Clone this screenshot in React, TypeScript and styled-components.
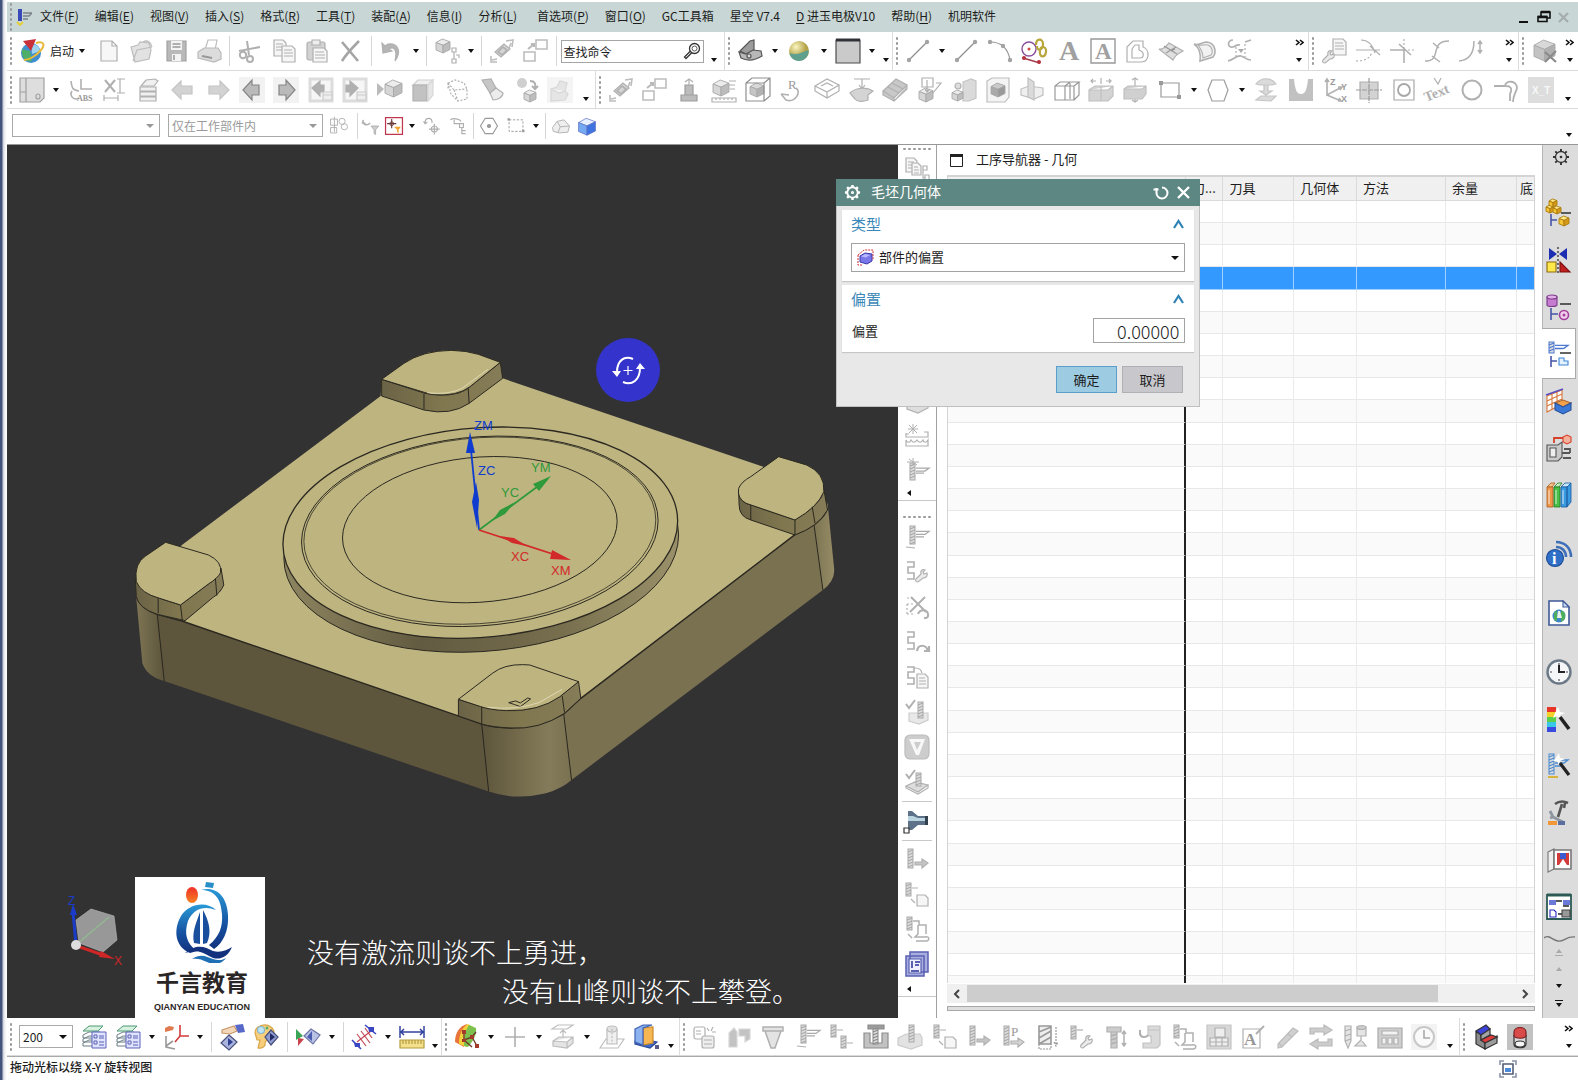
import React from "react";
import styled, { createGlobalStyle, css } from "styled-components";

const Global = createGlobalStyle`
  *, *::before, *::after { box-sizing: border-box; }
  body { margin: 0; background: #fff; }
  body, button, input, select, table { font-family: "Noto Sans CJK SC", "Noto Sans", sans-serif; color: #1c1c1c; }
  button { padding: 0; margin: 0; border: 0; background: none; }
`;

/* ---------- icon building blocks ---------- */

type Tri = [string, string, string];
const GRAY: Tri = ["#ececec", "#d6d6d6", "#bdbdbd"];

const Cube = ({ x = 4, y = 4, s = 18, c = GRAY, line = "#a8a8a8" }: { x?: number; y?: number; s?: number; c?: Tri; line?: string }) => (
  <g stroke={line} strokeWidth={0.9} strokeLinejoin="round">
    <path fill={c[0]} d={`M${x} ${y + s * 0.25}L${x + s * 0.45} ${y}L${x + s} ${y + s * 0.2}L${x + s * 0.5} ${y + s * 0.45}Z`} />
    <path fill={c[1]} d={`M${x} ${y + s * 0.25}L${x + s * 0.5} ${y + s * 0.45}V${y + s}L${x} ${y + s * 0.78}Z`} />
    <path fill={c[2]} d={`M${x + s} ${y + s * 0.2}L${x + s * 0.5} ${y + s * 0.45}V${y + s}L${x + s} ${y + s * 0.75}Z`} />
  </g>
);

const Page = ({ x, y, w = 10, h = 12, lines = true }: { x: number; y: number; w?: number; h?: number; lines?: boolean }) => (
  <g>
    <path fill="#f6f6f6" d={`M${x} ${y}h${w - 3}l3 3v${h - 3}h${-w}z`} />
    {lines && <path strokeWidth={1} d={`M${x + 2} ${y + 4}h${w - 5}M${x + 2} ${y + 7}h${w - 4}M${x + 2} ${y + 10}h${w - 4}`} />}
  </g>
);

const Mill = ({ x = 5, y = 2, h = 20, c = "#a9a9a9" }: { x?: number; y?: number; h?: number; c?: string }) => (
  <g stroke={c}>
    <rect x={x} y={y} width={5} height={h} fill="#dcdcdc" strokeWidth={1} />
    <path strokeWidth={1.2} d={Array.from({ length: Math.floor(h / 3) }, (_, i) => `M${x} ${y + 3 + i * 3}l5 -2`).join("")} />
  </g>
);

const MillLines = ({ x = 4, y = 2, h = 18, c = "#a9a9a9" }: { x?: number; y?: number; h?: number; c?: string }) => (
  <g stroke={c}>
    <Mill x={x} y={y} h={h} c={c} />
    <path strokeWidth={1.3} d={`M${x + 6} ${y + h * 0.3}h13l-4 3h-9M${x + 6} ${y + h * 0.6}h8`} />
  </g>
);

const Wrench = ({ x, y }: { x: number; y: number }) => (
  <path fill="#ebebeb" d={`M${x} ${y + 9}l5 -5c-1 -3 1 -5 4 -4l-2 2 1 2 3 -1c1 3 -1 5 -4 5l-5 4c-2 0 -3 -1 -2 -3z`} />
);

const Zig = ({ x = 3, y = 3 }: { x?: number; y?: number }) => (
  <path strokeWidth={1.6} d={`M${x} ${y}h7v5h-6v6h6v6h-7`} />
);

const Layers = () => (
  <g strokeWidth={1}>
    <path stroke="#6a7f86" fill="#fff" d="M2 19l6 -3h11v3l-6 3h-11zM2 15l6 -3h11v3l-6 3h-11zM2 11l6 -3h11v3l-6 3h-11z" />
    <path stroke="#4a9a72" fill="#d8f0e0" d="M2 7l6 -5h14l-5 5z" />
    <path stroke="#5a63b8" fill="#dfe3fb" d="M11 8h14v16h-14z" />
    <path stroke="#5a63b8" d="M13 11h3v3h-3zM13 17h3v3h-3zM18 12h5M18 14h5M18 18h5M18 21h5" />
  </g>
);

const ICONS: Record<string, React.ReactNode> = {
  newFile: <path fill="#f7f7f7" d="M5 3h11l5 5v15h-16z M16 3v5h5" />,
  open: <path fill="#e2e2e2" stroke="#bdbdbd" d="M2 9l7 -2 2 -3 9 1 2 7 -2 9 -14 3zM4 23l4 -11 15 -3M14 4c4 -3 8 0 9 5" />,
  save: <g><path fill="#b9b9b9" stroke="#a2a2a2" d="M4 3h19v20h-19z" /><path fill="#f4f4f4" stroke="none" d="M8 3h11v9h-11zM9 16h9v7h-9z" /><path stroke="#999" d="M9.500 6h8M9.500 9h8M11 17v5" strokeWidth={1.5} /></g>,
  print: <g><path fill="#fff" stroke="#bdbdbd" d="M9 12l3 -10h9l-2 10z" /><path fill="#dcdcdc" stroke="#bababa" d="M2 14l6 -4h14l3 5v6l-7 3 -16 -4z" /><path stroke="#999" strokeWidth={2} d="M6 18l10 2" /></g>,
  cut: <g strokeWidth={2}><path d="M10 3l2 14M2 13l21 -4" /><circle cx="6" cy="17" r="3.200" /><circle cx="13" cy="21" r="3" /></g>,
  copy: <g><Page x={3} y={2} w={12} h={16} /><Page x={11} y={8} w={13} h={16} /></g>,
  paste: <g><rect x="3" y="4" width="18" height="18" rx="2" fill="#d2d2d2" /><path fill="#eee" d="M8 2h8v5h-8z" /><Page x={9} y={10} w={14} h={14} /></g>,
  del: <path stroke="#a5a5a5" strokeWidth={2.600} d="M4 4l16 19M21 3c-6 6 -12 12 -17 20" />,
  undo: <path fill="#b5b5b5" stroke="#b0b0b0" d="M3 5l1 10 9 -2 -3 -2c4 -3 9 0 6 12 7 -10 3 -18 -7 -17l-3 2z" />,
  cubeTree: <g><Cube x={2} y={1} s={14} /><path d="M18 10h4v4h-4zM18 21h4v4h-4zM20 14v7M22 17h3v3" /></g>,
  rotBox: <g><path fill="#d5d5d5" d="M6 14l9 -8 6 5 -9 8z" /><path strokeWidth={1.600} d="M9 14l5 -5 4 3 -5 5z" /><path stroke="#bdbdbd" strokeWidth={1.600} d="M17 3l7 -1 -1 7M2 18v6h6M22 5l-2 5M3 22l5 -1" /></g>,
  twoBox: <g><path stroke="#bdbdbd" strokeWidth={1.600} d="M13 2h11v9h-11zM1 14h11v9h-11z" /><path stroke="#b9b9b9" strokeWidth={2} d="M5 11l5 -4M8 6h3v3" /></g>,
  clamp: <g stroke="#555"><path fill="#9c9c9c" d="M3 13l10 -10 4 -1v10l-6 5z" /><path fill="#b8b8b8" d="M2 14l2 6c6 3 13 3 21 -2l-1 -5 -8 -1 -7 4z" /><circle cx="12" cy="18" r="2" fill="#ddd" /></g>,
  square: <g><path fill="#cacaca" stroke="#4c4c4c" d="M1 2h24v23h-24z" /><path stroke="#2f3338" strokeWidth={3} d="M1 2h24" /></g>,
  line: <g><path stroke="#8e8e8e" strokeWidth={1.200} d="M4 22L22 4" /><g fill="#a3a3a3" stroke="none"><circle cx="4" cy="22" r="2.200" /><circle cx="22" cy="4" r="2.200" /></g></g>,
  arc: <g><path stroke="#999" d="M3 4q17 0 20 18" /><g fill="#a3a3a3" stroke="none"><circle cx="3" cy="4" r="2.200" /><circle cx="16" cy="8" r="2.200" /><circle cx="23" cy="22" r="2.200" /></g></g>,
  curveOn: <g strokeWidth={1.400}><circle cx="8" cy="11" r="7" stroke="#8a4f9a" /><circle cx="8" cy="11" r="1.500" fill="#c44" stroke="none" /><path stroke="#b9a63a" strokeWidth={2.200} d="M15 7c0 -7 7 -7 7 -1s-6 8 -6 2M19 13c0 -6 7 -5 6 1s-7 6 -6 -1" /><path stroke="#a33a4a" d="M2 20l17 5" /><g fill="#b5303a" stroke="none"><circle cx="3" cy="20" r="2" /><circle cx="18" cy="24" r="2" /></g></g>,
  offset: <g><path d="M3 9l6 -6h10v6c7 2 7 15 -2 15h-14z" /><path d="M8 11l3 -4h4v5c6 2 5 8 1 8h-8z" /></g>,
  sheet: <g><path fill="#dedede" d="M1 11c5 1 7 -3 10 -6l14 8c-4 2 -8 4 -10 9z" /><path stroke="#999" d="M8 15l10 -6M6 8l13 8M13 13l4 -2" /></g>,
  patch: <g><path fill="#f2f2f2" strokeWidth={1.600} d="M2 6c6 2 8 -2 13 -2 8 1 10 10 6 15l-13 4c1 -7 0 -13 -6 -17z" /><path d="M6 7c4 1 7 -1 10 0 5 2 5 8 3 10l-8 3c0 -5 -2 -9 -5 -13z" /></g>,
  spline: <g><path strokeWidth={1.700} d="M7 2c-6 0 -6 8 0 7 4 -1 3 -3 7 -2M2 23c5 -1 9 -6 13 -5s5 4 10 4M19 4l6 -2" /><path strokeDasharray="2 2" d="M10 9v11M19 6v13" /><path fill="#aaa" stroke="none" d="M12 11h6l-3 4z" /></g>,
  pageWrench: <g><Page x={12} y={1} w={13} h={16} /><Wrench x={2} y={13} /></g>,
  trimA: <g><path d="M1 12h24M6 2c8 0 12 6 14 13M15 8l10 9" /><path strokeDasharray="2 2" d="M1 23c8 0 14 -2 16 -9" /></g>,
  trimB: <g><path d="M1 12h14M15 11v14M10 6l12 11" strokeWidth={1.600} /><path strokeDasharray="2 2" d="M15 1v10M15 12h11" /></g>,
  trimC: <path strokeWidth={1.500} d="M1 23c10 0 10 -6 11 -10s2 -10 13 -10M9 5l6 5M8 18l8 6" />,
  trimD: <path strokeWidth={1.500} d="M1 23c11 -1 15 -8 15 -20M22 4v10M20 6l2 -3 2 3M20 12l2 3 2 -3" />,
  cubeX: <g><Cube x={3} y={2} s={21} c={["#d8d8d8", "#c3c3c3", "#b0b0b0"]} /><path stroke="#8b8b8b" strokeWidth={2.200} d="M14 14l11 10M25 13l-11 11" /></g>,

  sheetView: <g stroke="#a0a0a0"><path fill="#dedede" d="M1 1h24v20l-4 4h-20z" /><path d="M7 1v24M1 15h6" /><rect x="17" y="17" width="4" height="5" rx="2" /></g>,
  abs: <g><path strokeWidth={1.600} d="M13 2v10h11M3 4c1 8 2 9 8 10M4 14c-3 5 2 10 7 7" /><text x="9" y="24" fontSize="8" fontWeight="700" fontFamily="Liberation Serif" stroke="none" fill="#999">ABS</text></g>,
  dimX: <g><path strokeWidth={2} d="M3 3l10 12M13 3l-10 12" /><path d="M18 2v14M15 2h8M15 16h8M2 21h14M2 18v6M16 18v6" /></g>,
  layerList: <g fill="#f0f0f0"><path d="M10 3l9 -1 3 2 -4 5h-13z" /><path d="M4 10h16v4h-16zM4 15h16v4h-16zM4 20h16v4h-16z" /></g>,
  left: <path fill="#d3d3d3" stroke="#c4c4c4" d="M2 13l9 -9v5h11v8h-11v5z" />,
  right: <path fill="#d3d3d3" stroke="#c4c4c4" d="M24 13l-9 -9v5h-11v8h11v5z" />,
  leftD: <g><path fill="#f2f2f2" stroke="none" d="M0 0h26v26h-26z" /><path fill="#bababa" stroke="#858585" d="M4 13l9 -10v5h7v10h-7v5z" /></g>,
  rightD: <g><path fill="#f2f2f2" stroke="none" d="M0 0h26v26h-26z" /><path fill="#bababa" stroke="#858585" d="M22 13l-9 -10v5h-7v10h7v5z" /></g>,
  leftBox: <g><path fill="#f6f6f6" stroke="#dcdcdc" strokeWidth={3} d="M2 2h22v22h-22z" /><path fill="#b0b0b0" d="M4 11l8 -7v4h4v7h-4v4z" /><path fill="#eee" stroke="#ccc" d="M15 15h9v8h-9zM15 18h9" /></g>,
  rightBox: <g><path fill="#f6f6f6" stroke="#dcdcdc" strokeWidth={3} d="M2 2h22v22h-22z" /><path fill="#b0b0b0" d="M16 11l-8 -7v4h-4v7h4v4z" /><path fill="#eee" stroke="#ccc" d="M15 15h9v8h-9zM15 18h9" /></g>,
  cubeIn: <g><path fill="#bbb" stroke="none" d="M1 6l7 6 -7 7z" /><Cube x={9} y={3} s={17} /></g>,
  cubeSolid: <g><path fill="#efefef" stroke="#cfcfcf" d="M3 8l5 -5h15l-5 5z" /><path fill="#c2c2c2" stroke="#b0b0b0" d="M3 8h14v16h-14z" /><path fill="#e6e6e6" stroke="#d8d8d8" d="M18 8l5 -5v15l-5 6z" /></g>,
  wireBox: <g strokeDasharray="2 1.500"><path d="M3 6l7 -3 9 3 3 6v10l-9 2 -7 -7zM3 6l6 7 13 -1M9 13l4 11M3 6v6" /></g>,
  spotlight: <g><path fill="#c6c6c6" d="M3 3l9 -1 5 9 -6 5z" /><path fill="#ececec" d="M11 16l6 -5 7 5c0 4 -5 7 -10 7z" /></g>,
  cubeMove: <g><circle cx="9" cy="6" r="5" fill="#cfcfcf" stroke="none" /><path strokeWidth={2} d="M17 4c5 0 6 3 5 7M19 9l3 3 3 -3" /><Cube x={11} y={13} s={12} /></g>,
  fade: <g opacity={0.600}><path fill="#ededed" stroke="none" d="M0 0h26v26h-26z" /><path fill="#d5d5d5" stroke="#bdbdbd" d="M4 12l6 -2 3 -6 7 2 -2 8 3 3 -3 6 -14 1zM4 12l8 4 6 -2" /></g>,
  extrude: <g><path fill="#bcbcbc" stroke="#9d9d9d" d="M5 18h16v6h-16zM9 8h8v10h-8z" /><path d="M13 8v-6M9 5l4 -3 4 3" /></g>,
  ruler: <g><Cube x={2} y={3} s={16} /><path d="M1 21h24v4h-24zM5 21v2M9 21v2M13 21v2M17 21v2M21 21v2M18 4h7M18 8h6M19 12h5" /></g>,
  boundBox: <g><Cube x={5} y={6} s={14} c={["#d8d8d8", "#c5c5c5", "#b2b2b2"]} /><path stroke="#8f8f8f" d="M1 6h18v18h-18zM1 6l6 -5h18v18l-6 5M25 1l-6 5" /></g>,
  radius: <g><path strokeWidth={1.600} d="M17 11c6 4 -1 15 -10 12l-5 -6M2 17l8 1" /><text x="9" y="12" fontSize="13" fontFamily="Liberation Serif" stroke="none" fill="#9a9a9a">R</text></g>,
  plates: <path d="M1 9l12 -7 12 6 -12 7zM1 9v5l12 7 12 -7v-6M13 15v6M7 9l6 -3 6 3" />,
  surfDown: <g><path d="M6 2h16M14 2v9M11 8l3 4 3 -4" /><path fill="#d4d4d4" d="M2 16c6 -6 17 -6 23 -2l-5 4v5c-5 2 -11 2 -13 -1z" /></g>,
  slab: <path fill="#c8c8c8" d="M1 14L14 2l11 6 -13 13zM1 14v4l11 6v-3M12 24l13 -12v-4M6 10l11 6M10 6l11 6" />,
  press: <g><Cube x={3} y={11} s={14} /><path d="M6 1h11v9h-11zM11 3v11M9 12l2 3 3 -3M17 16l8 -10h-5" /></g>,
  dice: <g><path fill="#dadada" stroke="#c5c5c5" d="M12 5l8 -3 5 2v17l-7 3h-6z" /><Cube x={1} y={13} s={11} /><circle cx="7" cy="9" r="3" fill="#ddd" /></g>,
  cubeGray: <g><path fill="#f4f4f4" stroke="#bdbdbd" d="M2 4l5 -3h17v19l-4 5h-18z" /><Cube x={6} y={6} s={14} c={["#cacaca", "#aaaaaa", "#999999"]} /></g>,
  pin: <g stroke="#c0c0c0"><path fill="#efefef" d="M2 12l8 -3 14 2v7l-9 4 -13 -4z" /><path fill="#dadada" d="M9 1l6 4v18l-6 -3z" /></g>,
  wireTwo: <path stroke="#999" d="M1 9h10v14h-10zM11 9h9v14h-9M1 9l5 -4h19l-5 4M25 5v13l-5 5M11 9l5 -4M16 6v16" />,
  split: <g><path d="M8 4h-5M18 4h5M5 2l-2 2 2 2M21 2l2 2 -2 2M13 1v6" /><path fill="#d3d3d3" stroke="#c0c0c0" d="M1 13l6 -4h18v10l-5 5h-19zM1 13h19l5 -4M13 9v15" /></g>,
  stretch: <g><path d="M13 1v8M10 3l3 -2 3 2M10 23l3 2 3 -2M13 19v6" /><path fill="#d0d0d0" stroke="#c0c0c0" d="M2 12l4 -3h18v8l-4 5h-18zM2 12h18l4 -3" /></g>,
  rect: <g><path stroke="#9a9a9a" d="M4 6h18v14h-18z" /><path fill="#999" stroke="none" d="M2 4h4v4h-4zM20 18h4v4h-4z" /></g>,
  hex: <path stroke="#9c9c9c" d="M7 3h12l4 10 -4 11h-12l-4 -11z" />,
  ibeam: <path fill="#dadada" stroke="#c5c5c5" d="M3 7c5 -7 15 -7 20 0l-4 1h-12zM11 8h4v6h4l-6 4 -6 -4h4zM3 23l5 -4h15l-5 5z" />,
  vblock: <path fill="#c1c1c1" stroke="none" d="M1 2h5c1 11 3 15 7 15s6 -4 7 -15h5v22h-24z" />,
  csys: <g><path strokeWidth={1.600} d="M5 3v15l15 -8M5 18l14 6M3 5l2 -3 2 3M16 10l4 0 -2 3M16 24l3 0 -2 -3" /><g fontSize="9" fontWeight="700" fontFamily="Liberation Sans" stroke="none" fill="#9a9a9a"><text x="8" y="8">Z</text><text x="19" y="13">Y</text><text x="19" y="25">X</text></g></g>,
  crossBox: <g><path fill="#d3d3d3" d="M4 5h18v17h-18z" /><path stroke="#9a9a9a" strokeDasharray="5 1" d="M13 1v25M0 13h26" /></g>,
  circBox: <g stroke="#a8a8a8"><path d="M3 3h20v20h-20z" /><circle cx="13" cy="13" r="6" strokeWidth={1.800} /></g>,
  textObj: <g><text x="-1" y="22" fontSize="14" fontWeight="700" fontFamily="Liberation Serif" stroke="none" fill="#b0b0b0" transform="rotate(-22 8 18)">Text</text><path d="M9 1l4 6 3 -6" /></g>,
  circle: <circle cx="13" cy="13" r="9.500" stroke="#b0b0b0" strokeWidth={2} />,
  bend: <path strokeWidth={1.800} d="M1 9h11c0 -6 12 -6 12 2 -1 5 -4 7 -4 14M13 9c4 0 7 2 4 8v7" />,
  xt: <g><path fill="#dddddd" stroke="none" d="M0 0h26v26h-26z" /><text x="4" y="17" fontSize="10" fontWeight="700" fontFamily="Liberation Sans" stroke="none" fill="#f8f8f8">X_T</text></g>,

  asm: <g><path d="M2 4h9v8h-9zM7 1v20M2 15h8v7h-8z" /><circle cx="17" cy="7" r="4" /><circle cx="20" cy="14" r="4" /></g>,
  hook: <g><path strokeWidth={2} d="M3 8c2 5 6 4 9 1M3 5l-1 4 4 1" /><path fill="#ccc" d="M13 13h10l-4 5v6l-2 -1v-5z" /></g>,
  snapRed: <g><path stroke="#c2354f" strokeWidth={1.600} d="M2 2h22v22h-22z" /><path stroke="#6b3b3b" strokeWidth={1.500} d="M10 4v12M4 10h12" /><circle cx="10" cy="10" r="2.500" stroke="#6b3b3b" /><path fill="#f0a630" stroke="none" d="M13 14h9l-3 4v4l-2 -1v-3z" /></g>,
  snapGray: <path strokeWidth={1.600} d="M4 9c0 -8 10 -8 9 0M2 7l2 3 3 -2M16 10v14M9 17h14M16 13a4 4 0 1 0 .1 0" />,
  snapTree: <path strokeWidth={1.500} d="M3 5c4 -3 12 -1 14 2M8 5v5h7M15 10h5v5h-5zM18 15v8h5M18 19h5" />,
  nut: <g stroke="#999" strokeWidth={1.500}><path d="M8 3h10l6 10 -6 10h-10l-6 -10z" /><circle cx="13" cy="13" r="2" fill="#999" /></g>,
  dashSel: <g stroke="#999"><path strokeDasharray="3 2" d="M4 5h18v15h-18z" /><path fill="#999" stroke="none" d="M2 3h3v3h-3zM21 18h3v3h-3z" /></g>,
  rock: <path fill="#eee" d="M2 15l6 -8 9 -2 7 8 -2 8 -11 1 -8 -2zM8 7l4 7 -3 8M12 14l12 -1" />,
  blueCube: <Cube x={2} y={3} s={22} c={["#e6f0ff", "#75aaf2", "#3f74e0"]} line="#5a6ec4" />,

  magnetPin: <g stroke="#8a8a99"><path fill="#f3d7b8" stroke="#c69668" d="M3 6l12 -4 3 5 -7 3 -8 -1z" /><path fill="#5868c8" stroke="none" d="M16 1l8 -1 2 8 -7 1z" /><path fill="#aab4dd" stroke="#474f7a" d="M10 11l8 7 -8 8 -8 -7z" /><path fill="#2f3f90" stroke="none" d="M9 14l5 4 -5 4z" /></g>,
  palette: <g><path fill="#f7cf7c" stroke="#d9a648" d="M2 9c0 -8 11 -10 16 -6 4 3 4 8 0 11 -2 2 -6 2 -6 5 1 3 -3 6 -7 5l2 -8 -3 0z" /><circle cx="8" cy="6" r="3.500" fill="#bfe4f3" stroke="#89b6cc" /><circle cx="14" cy="4" r="1.500" fill="#5ab06a" stroke="none" /><path fill="#8f9ccf" stroke="#474f7a" d="M18 6l7 7 -7 8 -6 -8z" /><path fill="#222b66" stroke="none" d="M17 9l5 4 -5 4z" /></g>,
  flipDiamond: <g><path fill="#3aa557" stroke="none" d="M1 5l7 7 -7 4z" /><path fill="#c9454b" stroke="none" d="M3 22v-8l6 1z" /><path fill="#b9c1e4" stroke="#6c74a8" d="M9 12l7 -7 9 6 -7 9z" /><path fill="#4a5bb0" stroke="none" d="M17 7v10l-5 -4z" /></g>,
  measureRed: <g><path stroke="#c04a55" d="M6 18l14 -11M6 10l9 12M10 7l9 12M14 4l7 10" /><path stroke="#3b46c2" strokeWidth={1.600} d="M14 1l11 9M1 16l9 9" /><path fill="#3b46c2" stroke="none" d="M17 3h6v5h-5zM3 19h6v4h-5z" /></g>,
  measureLen: <g><path stroke="#3344a0" strokeWidth={1.500} d="M1 2v12M25 2v12M2 8h22M5 5l-3 3 3 3M21 5l3 3 -3 3" /><path fill="#f3df8c" stroke="#b59b3a" d="M1 16h24v8h-24z" /><path stroke="#b59b3a" d="M4 16v4M7 16v4M10 16v4M13 16v4M16 16v4M19 16v4M22 16v4" /></g>,
  csysRed: <g><path stroke="#999" strokeWidth={1.600} d="M3 12v11l9 2M3 22l7 -5" /><path stroke="#d23b3b" strokeWidth={1.600} d="M17 1v11h9M17 12l-5 6" /><path fill="#e07a4e" stroke="none" d="M2 4l4 -2 5 1 -1 3 -8 2z" /></g>,
  layers: <Layers />,
  analysis: <g><path fill="#e8743a" stroke="none" d="M1 18C1 8 6 2 13 0l-3 23z" /><path fill="#f2d23b" stroke="none" d="M5 20C5 9 9 3 14 0l5 3 -6 20z" /><path fill="#7cc04e" stroke="none" d="M10 22c0 -9 1 -15 5 -21l7 3c1 7 -3 13 -8 19z" /><path stroke="#6b3a2c" strokeWidth={1.400} d="M10 8v8l8 -3 5 9M10 16l8 7M18 13l4 -5" /><path fill="#a33a2c" stroke="none" d="M8 6h4v4h-4zM16 11h4v4h-4zM21 20h4v4h-4zM8 15h4v3h-4z" /></g>,
  plus: <path strokeWidth={1.600} d="M13 3v20M3 13h20" />,
  pushUp: <g stroke="#bdbdbd"><path d="M2 5l6 -4h15l-6 4zM13 6v8M10 9l3 -3 3 3" /><path fill="#e4e4e4" d="M3 17l6 -4h14v6l-6 5 -14 -2zM3 17l14 1 6 -5M17 18v6" /></g>,
  cyl: <g stroke="#bdbdbd"><path d="M1 24l6 -9h18l-6 9z" /><path fill="#f0f0f0" d="M8 5v15h10v-15" /><ellipse cx="13" cy="5" rx="5" ry="3" fill="#e2e2e2" /><path strokeDasharray="2 1.500" d="M13 5v15" /></g>,
  blockYellow: <g><path fill="#3d69c8" stroke="#2a4a9a" d="M2 17l9 -2 13 3 -7 6 -15 -4z" /><path fill="#f6b653" stroke="#c98a2b" d="M10 4l10 -1v16l-10 2z" /><path fill="#8db2f0" stroke="#3c62b5" d="M2 5l8 -4h9l-9 3v17l-8 -3z" /><path fill="#555a88" stroke="none" d="M22 21h4v4h-4z" /></g>,

  pages2: <g><rect x="2" y="3" width="11" height="12" rx="2" /><rect x="10" y="12" width="12" height="12" rx="2" fill="#eee" /><path d="M4 7h5M4 10h5M12 16h8M12 20h8M15 4l2 3M21 3l-2 4M24 8h-4" /></g>,
  bricks: <path fill="#c3c3c3" stroke="#d8d8d8" d="M3 9l5 -5 3 4v15h-8zM13 5h11v10l-5 3v-6h-6z" />,
  funnel: <path fill="#e3e3e3" strokeWidth={1.500} d="M3 3h20v4h-20zM5 7l6 17h4l6 -17" />,
  mill: <g><MillLines x={6} y={1} h={18} /><path d="M2 22l9 1" /></g>,
  mill2: <g><Mill x={2} y={1} h={12} /><path d="M8 6h6M18 19h6" /><Mill x={12} y={12} h={12} /></g>,
  holeDrill: <g stroke="#8d8d8d"><path fill="#c2c2c2" d="M1 9h6v10h12v-10h6v15h-24z" /><path fill="#9b9b9b" d="M5 1h16v4h-16z" /><Mill x={10} y={5} h={15} c="#888" /></g>,
  millBlock: <g><path fill="#e2e2e2" stroke="#ccc" d="M1 14l8 -4h14l2 4v7l-11 4 -13 -4z" /><Mill x={12} y={1} h={17} /></g>,
  millPage: <g><Mill x={2} y={1} h={13} /><path d="M8 6h6M7 17l4 4" /><Page x={13} y={13} w={11} h={11} lines={false} /></g>,
  millArrow: <g><Mill x={4} y={2} h={19} /><path fill="#c5c5c5" d="M11 15h7v-3l6 4 -6 5v-3h-7z" /></g>,
  millP: <g><Mill x={4} y={2} h={19} /><path fill="#d5d5d5" d="M11 17h7v-3l6 4 -6 5v-3h-7z" /><text x="11" y="12" fontSize="13" fontFamily="Liberation Serif" stroke="none" fill="#999">P</text></g>,
  helix: <g stroke="#999"><path fill="#eee" d="M5 2h12v18h-12zM5 8l12 -5M5 14l12 -7M5 20l12 -7" strokeWidth={1.600} /><path strokeDasharray="2 1" d="M5 20v5h12v-5M22 3v18M20 18l2 4 2 -4" /></g>,
  millWrench: <g><Mill x={2} y={2} h={13} /><path d="M8 6h6" /><Wrench x={12} y={12} /></g>,
  bolt: <g><path fill="#ccc" d="M4 3h14v5h-14zM8 8h6v16h-6z" /><path d="M8 12l6 -2M8 16l6 -2M8 20l6 -2M21 8v13M19 10l2 -3 2 3M19 19l2 3 2 -3" strokeWidth={1.500} /></g>,
  machine: <g><path fill="#dadada" stroke="#c2c2c2" d="M11 2h12v19l-3 3h-14v-5h8v-7h-3zM11 2h12v4h-12" /><path strokeWidth={2} d="M3 9c0 5 6 5 8 2M3 6v5" /></g>,
  millRobot: <g><Mill x={3} y={1} h={13} /><path d="M9 5h6v4h7v9M14 9v9l-3 3h10c5 -1 5 4 0 4h-9M4 18l4 4" strokeWidth={1.500} /></g>,
  calcM: <g><path fill="#d8d8d8" stroke="#c5c5c5" d="M1 1h24v24h-24z" /><path fill="#eee" d="M9 4h10v9h-10zM4 14h18v8h-18zM4 18h18M10 14v8M16 14v8" /></g>,
  aEdit: <g><path d="M3 5h17v19h-17z" /><text x="4" y="21" fontSize="17" fontWeight="700" fontFamily="Liberation Serif" stroke="none" fill="#979797">A</text><path strokeWidth={2} d="M16 10l8 -8" /></g>,
  pen: <path fill="#d0d0d0" stroke="#bcbcbc" d="M4 20l15 -16 5 3 -16 16 -4 1z M8 23l-3 -4M14 10l4 3" />,
  swap: <path fill="#cccccc" stroke="#b9b9b9" d="M2 10v-6h14v-3l8 5 -8 5v-3h-10v2zM24 15v7h-14v3l-8 -5 8 -5v3h10v-3z" />,
  tubes: <g><path fill="#e4e4e4" d="M2 2h6v15l-3 7 -3 -7zM2 7l6 -2M2 12l6 -2M2 17l6 -2M14 3h9v9h-9zM18 12v4l-6 6h11l-4 -5" /><ellipse cx="18.500" cy="3.500" rx="4.500" ry="2" fill="#ccc" /></g>,
  calc: <g><path fill="#cfcfcf" stroke="#aaa" d="M1 4h24v20h-24z" /><path fill="#f2f2f2" d="M5 7h16v4h-16zM5 14h4v6h-4zM11 14h4v6h-4zM17 14h4v6h-4z" /></g>,
  clock: <g><path fill="#f3f3f3" stroke="none" d="M0 0h26v26h-26z" /><circle cx="13" cy="13" r="10" stroke="#c8c8c8" strokeWidth={2} fill="#fafafa" /><path stroke="#aaa" strokeWidth={1.600} d="M13 6v8h6" /></g>,
  stepBlock: <g stroke="#333"><path fill="#8c8c8c" d="M3 8l5 2v5l4 2v8l-9 -5z" /><path fill="#a4a4a4" d="M8 10l9 -5v6l-9 5z" /><path fill="#9c9c9c" d="M12 18l12 -6v7l-12 6z" /><path fill="#3b43d8" d="M3 7l10 -6 4 4 -9 6z" /><path fill="#e03c3c" d="M8 16l10 -5 6 2 -12 6z" /></g>,
  stockCyl: <g><path fill="#c2c2c2" stroke="none" d="M0 0h26v26h-26z" /><path fill="#d9d9d9" stroke="#333" d="M7 11v9c0 5 12 5 12 0v-9" /><path fill="#d94b4b" stroke="#7a2020" d="M7 8c0 -6 12 -6 12 0v4c-2 3 -10 3 -12 0z" /><ellipse cx="13" cy="20" rx="5" ry="3" stroke="#333" fill="#f5f5f5" /></g>,

  docTree: <g><Page x={2} y={2} w={11} h={14} /><Page x={8} y={7} w={9} h={12} /><path d="M19 10h4v4h-4zM21 19h4v5h-4zM19 14v8h2" /></g>,
  millGear: <g><path fill="#dedede" d="M3 12l9 -6 12 4v8l-10 5 -11 -4z" /></g>,
  water: <g><path d="M2 11h3M20 9h4v5h-22v-4M2 17v6h22v-6c-2 3 -4 3 -5 0 -2 3 -4 3 -6 0 -2 3 -4 3 -6 0 -1 3 -4 3 -5 0" /><path d="M9 1v10M4 6h10M5 2l8 8M13 2l-8 8" strokeWidth={1} /></g>,
  millStar: <g><MillLines x={6} y={6} h={17} /><path d="M9 1v8M3 5h12M5 2l8 6" strokeWidth={1} /></g>,
  zigWrench: <g><Zig /><Wrench x={12} y={11} /></g>,
  zigX: <g><path strokeDasharray="2 2" d="M3 4h7M3 10h6M3 20h7M3 10v10" /><path strokeWidth={2} d="M7 3l15 15M21 3l-15 15" /><path strokeWidth={2} d="M14 20c2 -5 9 -5 10 0s-4 4 -4 4" /></g>,
  zigArrow: <g><Zig /><path strokeWidth={2.200} d="M13 22c1 -7 9 -7 11 0M25 17v5h-5" /></g>,
  zigPage: <g><Zig /><Page x={13} y={10} w={11} h={14} /><path d="M11 4c5 0 6 2 7 5" /></g>,
  checkMill: <g><path strokeWidth={2} d="M2 5l3 4 6 -8" /><path fill="#e8e8e8" stroke="#ccc" d="M5 14h19v7l-9 4 -10 -3z" /><Mill x={14} y={3} h={16} /></g>,
  vBadge: <g><rect x="1" y="1" width="24" height="24" rx="5" fill="#cdcdcd" stroke="#bcbcbc" /><path fill="#f8f8f8" stroke="none" d="M5 5h16l-6 16h-3zM10 8l3 8 4 -8z" fillRule="evenodd" /></g>,
  checkPlate: <g><path strokeWidth={2} d="M2 5l3 4 6 -8" /><path fill="#ddd" d="M2 17l9 -4 13 3 -10 7z" /><path d="M2 17v2l12 6 10 -6v-3" /><Mill x={12} y={4} h={13} /></g>,
  toolHolder: <g stroke="none"><path fill="#5d7288" d="M4 3h4l6 5h10v9h-10l-6 5h-4z" /><path fill="#b9d3df" d="M4 8h5l5 2h10v3h-20z" /><path fill="#33414f" d="M21 8h3v9h-3z" /><path fill="#fff" stroke="#333" d="M0 20h5v5h-5z" /></g>,
  shopDoc: <g stroke="#5960b0"><path fill="#a9aee0" strokeWidth={1.500} d="M6 1h18v20h-18zM2 5h18v20h-18z" /><path fill="#eef" d="M5 8h12v14h-12z" /><path strokeWidth={2} d="M8 10v7M11 11h5M11 14h4M7 20h8" /></g>,
};

/* ---------- shared controls ---------- */

const IconSvg = styled.svg`
  width: 26px;
  height: 26px;
  display: block;
  flex: none;
  overflow: visible;
`;

const Icon = ({ name }: { name: string }) => (
  <IconSvg viewBox="0 0 26 26" fill="none" stroke="#b0b0b0" strokeWidth={1.2} aria-hidden>
    {ICONS[name]}
  </IconSvg>
);

const Triangle = styled.i<{ $dir?: "up" | "left"; $tone?: string }>`
  display: block;
  width: 0;
  height: 0;
  border: 3px solid transparent;
  ${({ $dir, $tone = "#111" }) =>
    $dir === "left"
      ? css`border-right: 4px solid ${$tone}; border-left: 0;`
      : $dir === "up"
      ? css`border-bottom: 4px solid ${$tone}; border-top: 0;`
      : css`border-top: 4px solid ${$tone}; border-bottom: 0;`}
`;

const ToolButton = styled.button`
  flex: 34 1 0;
  min-width: 0;
  height: 34px;
  display: flex;
  align-items: center;
  justify-content: center;
`;

const DropButton = styled.button`
  flex: 14 1 0;
  min-width: 0;
  height: 34px;
  display: flex;
  align-items: center;
  justify-content: center;
`;

const Divider = styled.span`
  flex: 8 1 0;
  height: 30px;
  background: linear-gradient(#d6d6d6, #d6d6d6) center / 1px 100% no-repeat;
`;

const Spacer = styled.span<{ $w: number }>`
  flex: ${({ $w }) => $w} 1 0;
`;

const Grip = styled.span`
  flex: none;
  width: 8px;
  height: 30px;
  background: radial-gradient(circle, #9a9a9a 1px, transparent 1.5px) center top / 4px 5px repeat-y;
`;

const OverflowButton = styled.button<{ $w: number }>`
  flex: ${({ $w }) => $w} 1 0;
  min-width: 10px;
  height: 38px;
  padding-bottom: 8px;
  display: flex;
  flex-direction: column;
  align-items: center;
  justify-content: flex-end;
  gap: 12px;
  svg { width: 9px; height: 7px; display: block; }
`;

const Section = styled.div<{ $w: number }>`
  flex: ${({ $w }) => $w} 1 0;
  min-width: 0;
  display: flex;
  align-items: center;
  & + & { border-left: 1px solid #dcdcdc; }
`;

const Overflow = ({ w, more }: { w: number; more?: boolean }) => (
  <OverflowButton $w={w} aria-label="工具栏选项">
    {more && (
      <svg viewBox="0 0 9 7" fill="none" stroke="#111" strokeWidth={1.6}><path d="M1 1l3 2.500l-3 2.500M5 1l3 2.500l-3 2.500" /></svg>
    )}
    <Triangle />
  </OverflowButton>
);

type Item = string | React.ReactElement;

const ToolItems = ({ items }: { items: Item[] }) => (
  <>
    {items.map((it, i) => {
      if (typeof it !== "string") return React.cloneElement(it, { key: i });
      if (it === "v") return <DropButton key={i} aria-label="展开"><Triangle /></DropButton>;
      if (it === "|") return <Divider key={i} />;
      return <ToolButton key={i} aria-label={it}><Icon name={it} /></ToolButton>;
    })}
  </>
);

/* ---------- frame ---------- */

const Frame = styled.div`
  min-height: 100vh;
  display: flex;
`;

const DesktopEdge = styled.div`
  flex: none;
  width: 7px;
  background: linear-gradient(90deg, #43547c 0 2px, #c9ced9 3px, #f3f4f6 5px, #fff 7px);
`;

const Shell = styled.div`
  flex: 1;
  min-width: 0;
  display: flex;
  flex-direction: column;
  padding-top: 2px;
`;

const MenuBar = styled.nav`
  height: 30px;
  padding: 0 6px 0 0;
  display: flex;
  align-items: center;
  background: #c8d7d5;
`;

const MenuLogo = styled.svg`
  width: 16px;
  height: 18px;
  flex: none;
  margin-left: 1px;
`;

const MenuItem = styled.button<{ $wide?: boolean }>`
  height: 26px;
  padding: 0 8px 3px;
  margin-left: ${({ $wide }) => ($wide ? 4 : 0)}px;
  font-size: 12px;
  line-height: 18px;
  white-space: pre;
  u { text-underline-offset: 2px; }
`;

const WindowButtons = styled.div`
  margin-left: auto;
  display: flex;
  align-items: center;
  gap: 4px;
  svg { width: 16px; height: 16px; display: block; }
`;

const ToolRow = styled.div<{ $h: number }>`
  height: ${({ $h }) => $h}px;
  flex: none;
  display: flex;
  align-items: stretch;
  border-bottom: 1px solid #dadada;
`;

const StartButton = styled.button`
  flex: none;
  width: 77px;
  display: flex;
  align-items: center;
  gap: 5px;
  padding-left: 4px;
  font-size: 12px;
  white-space: nowrap;
  span { padding-bottom: 2px; }
`;

const SearchBox = styled.label`
  flex: 140 1 0;
  min-width: 0;
  height: 23px;
  display: flex;
  align-items: center;
  border: 1px solid #a5a5a5;
  padding: 0 2px;
  input {
    flex: 1;
    min-width: 0;
    border: 0;
    outline: 0;
    padding: 0;
    font-size: 12px;
    &::placeholder { color: #1c1c1c; opacity: 1; }
  }
  svg { width: 18px; height: 18px; flex: none; }
`;

const FilterRow = styled.div`
  height: 36px;
  flex: none;
  display: flex;
  align-items: center;
  padding: 0 4px 2px 5px;
  border-bottom: 1px solid #979797;
`;

const FilterSelects = styled.div`
  display: flex;
  gap: 8px;
`;

const SelectWrap = styled.span<{ $w: number; $tone?: string }>`
  position: relative;
  flex: none;
  display: block;
  width: ${({ $w }) => $w}px;
  select {
    display: block;
    width: 100%;
    height: 23px;
    padding: 0 18px 0 3px;
    appearance: none;
    border: 1px solid #a9a9a9;
    border-radius: 0;
    background: #fff;
    font-size: 12px;
    color: ${({ $tone = "#1c1c1c" }) => $tone};
  }
  > i {
    position: absolute;
    right: 6px;
    top: 50%;
    margin-top: -2px;
    border-width: 4px;
    border-bottom-width: 0;
    border-top-color: ${({ $tone }) => ($tone ? "#999" : "#111")};
    pointer-events: none;
  }
`;

const FilterTools = styled.div`
  display: flex;
  align-items: center;
  svg { width: 20px; height: 20px; }
`;

const SmallButton = styled.button<{ $w?: number }>`
  width: ${({ $w = 28 }) => $w}px;
  height: 28px;
  display: flex;
  align-items: center;
  justify-content: center;
`;

const SmallDivider = styled.span`
  width: 4px;
  height: 26px;
  background: linear-gradient(#d6d6d6, #d6d6d6) center / 1px 100% no-repeat;
`;

const Main = styled.main`
  position: relative;
  flex: 1;
  min-height: 0;
  display: flex;
`;

/* ---------- 3D view ---------- */

const Viewport = styled.section`
  position: relative;
  flex: 891 1 0;
  min-width: 0;
  background: #333233;
  overflow: hidden;
  > svg { position: absolute; inset: 0; width: 100%; height: 100%; }
`;

const LogoCard = styled.figure`
  position: absolute;
  left: 128px;
  bottom: 0;
  width: 130px;
  height: 141px;
  margin: 0;
  background: #fff;
  display: flex;
  flex-direction: column;
  align-items: center;
  padding-left: 4px;
  svg { width: 130px; height: 86px; flex: none; }
`;

const LogoName = styled.strong`
  font-size: 23px;
  line-height: 37px;
  font-weight: 700;
  color: #2b2626;
`;

const LogoLatin = styled.span`
  font-family: "Liberation Sans Narrow", "Liberation Sans", sans-serif;
  font-size: 9px;
  line-height: 14px;
  font-weight: 700;
  color: #2b2626;
  white-space: nowrap;
`;

const Slogan = styled.p`
  position: absolute;
  left: 300px;
  bottom: 8px;
  margin: 0;
  font-size: 27px;
  line-height: 39px;
  font-weight: 300;
  color: #fff;
  white-space: nowrap;
  span { display: block; }
  span + span { padding-left: 195px; }
`;

const TOP = "#beb480";
const EDGE = "#2b2820";

const Ring = ({ cx, cy, rx, ry, sh, ...rest }: { cx: number; cy: number; rx: number; ry: number; sh: number } & React.SVGProps<SVGCircleElement>) => (
  <circle {...rest} r={1} cx={0} cy={0} transform={`matrix(${rx} ${-sh} 0 ${ry} ${cx} ${cy})`} vectorEffect="non-scaling-stroke" />
);

const P = (props: React.SVGProps<SVGPathElement>) => <path vectorEffect="non-scaling-stroke" {...props} />;

const Model = () => (
  <svg viewBox="7 145 891 873" aria-label="三维模型">
    <defs>
      <linearGradient id="cornerL"><stop offset="0" stopColor="#7d7553" /><stop offset="1" stopColor="#5d553c" /></linearGradient>
      <linearGradient id="cornerF"><stop offset="0" stopColor="#5d553c" /><stop offset="0.500" stopColor="#786f4f" /><stop offset="0.750" stopColor="#847b5a" /><stop offset="1" stopColor="#7a7151" /></linearGradient>
      <linearGradient id="cornerR"><stop offset="0" stopColor="#7a7151" /><stop offset="1" stopColor="#968d66" /></linearGradient>
      <linearGradient id="discSide"><stop offset="0" stopColor="#8d8460" /><stop offset="0.350" stopColor="#635b41" /><stop offset="0.700" stopColor="#776e4e" /><stop offset="1" stopColor="#9a916a" /></linearGradient>
      <linearGradient id="padSide"><stop offset="0" stopColor="#6b6346" /><stop offset="0.500" stopColor="#80774f" /><stop offset="1" stopColor="#857c58" /></linearGradient>
    </defs>
    <g transform="translate(120 330) scale(.4655 .3333)" strokeWidth={1} strokeLinejoin="round">
      <P fill="#5d553c" d="M80 850L95 1053L792 1385L777 1182L725 1157L133 873Z" />
      <P fill="url(#cornerL)" d="M34 790L48 1000Q58 1040 95 1053L80 853Q45 835 34 790Z" />
      <P fill="url(#cornerF)" d="M777 1180L792 1385Q850 1412 915 1390Q950 1375 970 1350L953 1140Z" />
      <P fill="#7a7151" d="M953 1150L970 1350L1510 780L1490 570L1450 613L990 1103Z" />
      <P fill="url(#cornerR)" d="M1488 565L1510 780Q1537 750 1534 715L1520 520Z" />
      <P fill={TOP} d="M133 645L560 198L562 148L822 145L1385 412L1520 535Q1500 590 1450 614L990 1105L955 1150Q900 1200 840 1194Q800 1192 725 1157L133 873L80 853Q45 835 35 800Z" />
      <g fill="none" stroke={EDGE}>
        <P d="M35 800Q45 835 80 853L133 873L725 1157L777 1182Q800 1192 840 1194Q900 1195 955 1150L990 1105L1450 614Q1510 580 1520 535" strokeWidth={1.5} />
        <P d="M80 853L95 1053M777 1182L792 1385M953 1150L970 1350M1490 575L1510 780" />
      </g>

      <Ring cx={776} cy={650} rx={424} ry={315} sh={35} fill="url(#discSide)" stroke={EDGE} />
      <Ring cx={774} cy={608} rx={424} ry={315} sh={35} fill={TOP} stroke={EDGE} strokeWidth={1.3} />
      <Ring cx={773} cy={604} rx={383} ry={284} sh={32} fill="none" stroke={EDGE} />
      <Ring cx={773} cy={602} rx={378} ry={279} sh={32} fill="none" stroke={EDGE} strokeWidth={0.8} />
      <Ring cx={773} cy={599} rx={295} ry={218} sh={25} fill="none" stroke={EDGE} />

      <g stroke={EDGE}>
        <P fill="url(#padSide)" d="M562 148L655 190Q715 205 745 178L817 97L822 145L750 220Q710 258 653 240L562 198Z" />
        <P fill={TOP} d="M562 148L610 100Q650 62 712 61Q745 62 770 73L817 97L752 170Q725 200 670 194Z" />
        <P d="M653 192V238M748 175L750 220" />
        <P fill="url(#padSide)" d="M1329 485Q1330 510 1345 520L1450 570Q1510 520 1512 478L1520 540Q1500 590 1450 615L1355 570Q1330 560 1330 525Z" />
        <P fill={TOP} d="M1415 380L1475 405Q1515 430 1512 485Q1500 530 1450 570L1345 520Q1325 505 1329 475Q1335 455 1355 440Z" />
        <P d="M1450 570V615M1487 530L1493 580M1355 525V570" />
        <P fill="url(#padSide)" d="M33 750Q45 790 85 805L130 825L190 762Q215 740 217 715L223 765Q215 790 200 802L140 872L80 853Q40 835 35 800Z" />
        <P fill={TOP} d="M98 637L190 675Q220 695 216 728Q210 745 190 762L130 825L85 805Q45 790 35 755Q30 700 55 678Z" />
        <P d="M130 825L134 872M205 745L208 797M82 805V850" />
        <P fill="url(#padSide)" d="M727 1108L775 1130Q810 1143 850 1142Q905 1138 945 1100L985 1055L990 1105L955 1150Q900 1200 840 1194Q800 1192 777 1182L727 1158Z" />
        <P fill={TOP} d="M727 1108L800 1030Q825 1003 865 1004L880 1005L985 1055L945 1100Q900 1145 830 1142Q795 1140 775 1130Z" />
        <P d="M777 1131V1182M950 1098L955 1148" />
        <P fill="none" d="M835 1118L850 1113L860 1119L876 1104L882 1107L860 1130L848 1124Z" />
      </g>
      <g fill="none" stroke="#e6e0bf" strokeWidth={0.8}>
        <P d="M660 188Q705 196 735 175L790 118" />
        <P d="M790 1132Q850 1142 900 1118L950 1078" />
      </g>
    </g>

    <g strokeWidth={1.8} fontFamily="Liberation Sans, sans-serif" fontSize={13}>
      <g stroke="#0f3ccf" fill="#0f3ccf">
        <path d="M479 530L470 440" />
        <path stroke="none" d="M470 432L466 453H475ZM476 482L472 502L477 528L479 500Z" />
        <g stroke="none"><text x={474} y={430}>ZM</text><text x={478} y={475}>ZC</text></g>
      </g>
      <g stroke="#2f9a3a" fill="#2f9a3a">
        <path d="M479 530L545 481" />
        <path stroke="none" d="M551 476L533 484L539 491ZM515 502L500 510L492 521L505 514Z" />
        <g stroke="none"><text x={531} y={472}>YM</text><text x={501} y={497}>YC</text></g>
      </g>
      <g stroke="#d22a2a" fill="#d22a2a">
        <path d="M479 530L562 557" />
        <path stroke="none" d="M571 560L552 550L550 559ZM527 546L514 538L500 536L512 543Z" />
        <g stroke="none"><text x={511} y={561}>XC</text><text x={551} y={575}>XM</text></g>
      </g>
    </g>

    <circle cx={628} cy={370} r={32} fill="#3434cc" />
    <g fill="none" stroke="#fff" strokeWidth={2}>
      <path d="M633 359C624 355 617 361 617 372M623 382C632 386 640 380 640 368" />
      <path fill="#fff" stroke="none" d="M612 371h9l-4 6zM636 369h9l-5 -6z" />
      <path strokeWidth={1.2} d="M628 366v9M623.500 370.500h9" />
    </g>

    <path fill="#aaaaaa" fillOpacity={0.85} stroke="#bbb" strokeWidth={0.6} d="M91 909L114 916L117 940L103 952L79 943L76 920Z" />
    <path stroke="#8fc48f" strokeWidth={1.5} d="M77 944L109 917" strokeOpacity={0.7} />
    <path stroke="#1a3cc8" strokeWidth={3} d="M76 945L73 912" />
    <path fill="#1a3cc8" d="M73 904l-3 11h7z" />
    <path stroke="#cf2626" strokeWidth={3} d="M77 946L106 956" />
    <path fill="#cf2626" d="M115 959l-14 -8 -2 6z" />
    <circle cx={76} cy={945} r={5} fill="#ddd" />
    <text x={68} y={905} fontSize={12} fill="#1a3cc8" fontFamily="Liberation Sans, sans-serif">Z</text>
    <text x={114} y={965} fontSize={12} fill="#cf2626" fontFamily="Liberation Sans, sans-serif">X</text>
  </svg>
);

/* ---------- vertical toolbar ---------- */

const SideTools = styled.div`
  flex: none;
  width: 39px;
  display: flex;
  flex-direction: column;
  gap: 12px;
  padding-bottom: 21px;
  background: #fff;
  border-right: 1px solid #a0a0a0;
`;

const SideGroup = styled.div<{ $w: number }>`
  flex: ${({ $w }) => $w} 1 0;
  min-height: 0;
  display: flex;
  flex-direction: column;
  border-bottom: 1px solid #c9c9c9;
  ${ToolButton} { width: 100%; height: auto; min-height: 0; }
  ${Divider} { flex: 4 1 0; width: 30px; height: auto; margin-left: 4px; background: linear-gradient(#c9c9c9, #c9c9c9) center / 100% 1px no-repeat; }
  ${DropButton} { height: auto; justify-content: flex-start; padding-left: 9px; }
`;

const SideGrip = styled.span`
  flex: none;
  height: 7px;
  margin: 0 4px;
  background: radial-gradient(circle, #9a9a9a 1px, transparent 1.5px) left center / 5px 4px repeat-x;
`;

/* ---------- navigator ---------- */

const Navigator = styled.section`
  flex: 588 1 0;
  min-width: 0;
  display: flex;
  flex-direction: column;
  padding: 0 7px 7px 10px;
  background: #fff;
`;

const NavTitle = styled.h2`
  height: 30px;
  margin: 0;
  padding: 0 0 3px 3px;
  display: flex;
  align-items: center;
  gap: 13px;
  font-size: 13px;
  font-weight: 400;
  svg { width: 13px; height: 13px; margin-top: 3px; }
`;

const TableBox = styled.div`
  flex: 1;
  min-height: 0;
  display: flex;
  border: 1px solid #d4d4d4;
  border-top: 2px solid #d4d4d4;
  border-bottom: 0;
`;

const OpTable = styled.table`
  width: 100%;
  height: 100%;
  table-layout: fixed;
  border-collapse: separate;
  border-spacing: 0;
  font-size: 13px;
  th {
    height: 24px;
    padding: 0 6px 2px;
    background: #f0f0f0;
    border-right: 1px solid #dadada;
    border-bottom: 1px solid #dadada;
    font-weight: 400;
    line-height: 20px;
    text-align: left;
    white-space: nowrap;
  }
  td { height: 22px; padding: 0; border-right: 1px solid #ebebeb; border-bottom: 1px solid #e8e8e8; }
  tr:nth-child(even) td { background: #fafafa; }
  td:first-child { border-right: 2px solid #222; }
  th:last-child, td:last-child { border-right: 0; }
  th:last-child { padding: 0 0 2px 3px; }
  tbody tr:last-child td { height: 6px; border-bottom: 0; }
  tbody tr[aria-selected="true"] td { background: #3399ff; border-color: #9fd0ff; }
`;

const HScroll = styled.div`
  flex: none;
  height: 19px;
  margin-top: 1px;
  display: flex;
  align-items: center;
  background: #f0f0f0;
  button { width: 20px; height: 17px; display: flex; align-items: center; justify-content: center; }
  svg { width: 8px; height: 10px; }
`;

const Track = styled.div`
  flex: 1;
  height: 17px;
  &::before { content: ""; display: block; width: 86%; height: 100%; background: #cdcdcd; }
`;

const NavFoot = styled.div`
  flex: none;
  height: 5px;
  margin-top: 3px;
  background: #dedede;
  border: 1px solid #a8a8a8;
`;

/* ---------- resource bar ---------- */

const ResourceBar = styled.aside`
  flex: none;
  width: 36px;
  display: flex;
  flex-direction: column;
  align-items: stretch;
  background: #dcdcdc;
  border-left: 1px solid #b5b5b5;
`;

const ResButton = styled.button<{ $active?: boolean; $apart?: boolean }>`
  flex: none;
  height: 47px;
  margin: ${({ $apart }) => ($apart ? 12 : 0)}px 4px 0 0;
  display: flex;
  align-items: center;
  justify-content: center;
  ${({ $active }) => $active && css`background: #fff; border: 1px solid #a9a9a9; border-left: 0; height: 51px; margin: -2px 2px -2px -1px;`}
`;

const ResTop = styled.button`
  flex: none;
  height: 44px;
  padding-bottom: 20px;
  display: flex;
  align-items: center;
  justify-content: center;
  svg { width: 18px; height: 18px; }
`;

const ResScroll = styled.div`
  display: flex;
  flex-direction: column;
  align-items: center;
  padding: 4px 4px 0 0;
  gap: 3px;
  button { width: 24px; height: 14px; display: flex; flex-direction: column; gap: 2px; align-items: center; justify-content: center; }
  > svg { width: 32px; height: 8px; flex: none; margin-left: 3px; }
`;

const Bar = styled.i<{ $tone: string }>`
  width: 8px;
  height: 1px;
  background: ${({ $tone }) => $tone};
`;

const GOLD: Tri = ["#ffe680", "#f5c533", "#d79a18"];

const RES: Record<string, React.ReactNode> = {
  装配导航器: <g strokeWidth={1}><Cube x={0} y={5} s={8} c={GOLD} line="#a87a10" /><Cube x={7} y={6} s={8} c={GOLD} line="#a87a10" /><Cube x={3} y={-1} s={8} c={GOLD} line="#a87a10" /><path stroke="#4656a8" strokeWidth={1.6} d="M5 14v12M5 20h6" /><path stroke="#222" strokeWidth={1.4} d="M15 13h10" /><Cube x={13} y={16} s={10} c={GOLD} line="#a87a10" /></g>,
  约束导航器: <g><path fill="#1c2fb0" stroke="none" d="M3 1l8 6 -8 6zM21 1l-8 6 8 6z" /><path stroke="#111" strokeDasharray="2 2" d="M12 0v26" /><path fill="#ffe94a" stroke="#8a6a10" d="M1 15h9v10h-9z" /><path fill="#c21f1f" stroke="#7a1010" d="M14 15l10 10h-10z" /></g>,
  部件导航器: <g><path fill="#c57bd0" stroke="#7a3a88" d="M1 3v8c0 2 10 2 10 0v-8z" /><ellipse cx="6" cy="3" rx="5" ry="2" fill="#e3b0ea" stroke="#7a3a88" /><path stroke="#4656a8" strokeWidth={1.6} d="M5 14v12M5 20h7" /><path stroke="#222" strokeWidth={1.4} d="M14 10h11" /><circle cx="18" cy="21" r="4.500" stroke="#a0409a" fill="#f3cfee" strokeWidth={1.6} /><circle cx="18" cy="21" r="1.500" fill="#a0409a" stroke="none" /></g>,
  工序导航器: <g><MillLines x={3} y={1} h={11} c="#4a78d0" /><path stroke="#4656a8" strokeWidth={1.6} d="M5 15v11M5 20h6" /><path stroke="#222" strokeWidth={1.4} d="M14 12h11" /><path stroke="#3f86d8" fill="#e5f1fc" d="M13 17h5v3h4v4h-9z" /></g>,
  加工特征导航器: <g><path fill="#fff" stroke="#d6763a" d="M1 8l15 -6v14l-15 8zM1 13l15 -7M1 18l15 -7M6 6v15M11 4v15" /><path stroke="#5a4fc0" strokeWidth={1.6} d="M0 7l17 -6" /><path fill="#f4a24a" stroke="#a8662a" d="M9 15l8 -3 8 3 -8 4z" /><path fill="#3a78d8" stroke="#28509a" d="M9 15l8 4 8 -4v7l-8 4 -8 -4z" /></g>,
  机床导航器: <g><path fill="#c9c9c9" stroke="#555" d="M1 10h11l4 -3v15l-4 4h-11z" /><path fill="#eee" stroke="#555" d="M4 13h6v9h-6z" /><path stroke="#555" strokeWidth={1.800} d="M16 18h8M18 14h6v4M17 23h8" /><path stroke="#d6402a" strokeWidth={1.8} d="M8 8v-5h9" /><path fill="#f3b09a" stroke="#d6402a" d="M17 2l4 -2 4 2v5l-4 2 -4 -2z" /></g>,
  重用库: <g strokeWidth={0.8}><path fill="#f8c48a" stroke="#a85a1a" d="M1 5l4 -4h4l-3 4z" /><path fill="#f0964a" stroke="#a85a1a" d="M1 5h6v20h-6z" /><path fill="#c8f0c0" stroke="#1f7a1f" d="M8 5l4 -4h4l-3 4z" /><path fill="#4ac04a" stroke="#1f7a1f" d="M8 5h6v20h-6z" /><path fill="#c8e6fa" stroke="#1a5aa0" d="M15 5l4 -4h6l-4 4z" /><path fill="#3a9ae0" stroke="#1a5aa0" d="M15 5h6v20h-6zM21 5l4 -4v19l-4 5z" /><path stroke="#fff" d="M3 8v14M10 8v14M17 8v14" /></g>,
  信息: <g><circle cx="9" cy="17" r="8.500" fill="#2f6fc8" stroke="#1d4c98" /><text x="6" y="23" fontSize="16" fontWeight="700" fontFamily="Liberation Serif" fill="#fff" stroke="none">i</text><path stroke="#3f6fb8" strokeWidth={2.600} d="M10 6c6 0 10 4 10 10M10 1c9 0 15 6 15 15" /></g>,
  浏览器: <g><path fill="#fff" stroke="#3f5a98" strokeWidth={1.6} d="M3 1h14l6 6v18h-20z" /><path fill="#cfdcf5" stroke="#3f5a98" d="M17 1v6h6z" /><circle cx="13" cy="16" r="6.500" fill="#3f86c8" stroke="none" /><path fill="#4fae5a" stroke="none" d="M8 13l3 -3v11l-3 -1zM15 10l4 3v6l-4 3z" /><path fill="#e8f4e8" stroke="none" d="M12 11h2l2 7h-5z" /></g>,
  历史记录: <g><circle cx="13" cy="13" r="11.500" fill="#f4f6f8" stroke="#6b7886" strokeWidth={2.400} /><path stroke="#445" d="M13 4v2M13 20v2M4 13h2M20 13h2" /><path stroke="#222" strokeWidth={2} d="M13 6v7h6" /></g>,
  可视化: <g stroke="none"><path fill="#e8352a" d="M1 1h9v5h-9z" /><path fill="#f5d02a" d="M1 6h9v5h-9z" /><path fill="#5ad04a" d="M1 11h9v5h-9z" /><path fill="#3ac8e8" d="M1 16h9v5h-9z" /><path fill="#3a4ae0" d="M1 21h9v5h-9z" /><path fill="#fff" d="M12 1l2 5 5 1 -5 2 1 5 -4 -4 -4 2 2 -5z" /><path stroke="#222" strokeWidth={3.600} d="M14 11l9 12" /></g>,
  加工向导: <g><MillLines x={3} y={1} h={20} c="#4a8ad0" /><path stroke="#d8b53a" strokeWidth={2} d="M2 24h10" /><path stroke="none" fill="#fff" d="M13 0l1 5 5 1 -5 2 -1 4 -2 -4 -4 0 3 -3z" /><path stroke="#222" strokeWidth={3.200} d="M14 10l9 12" /></g>,
  角色工具: <g><path stroke="#555" strokeWidth={2.600} d="M9 4c4 -3 9 -3 13 -1M19 3l-1 5M16 4l-4 13" /><path stroke="#8d959e" strokeWidth={2.800} d="M4 11l3 6 10 5M4 18l3 -1" /><path fill="#f2963a" stroke="none" d="M2 21h9v4h-9z" /><path fill="#5b6ea0" stroke="none" d="M12 21h7v4h-7z" /></g>,
  角色: <g><path fill="#eee" stroke="#777" d="M2 5l6 -3v20l-6 3z" /><path fill="#fff" stroke="#777" strokeWidth={1.6} d="M8 3h17v19h-17z" /><path fill="#d23a3a" stroke="none" d="M11 6h12v12h-12z" /><path fill="#3a5ad0" stroke="none" d="M14 6h6v6h-6z" /><path fill="#fff" stroke="none" d="M13 18l4 -6 4 6z" /></g>,
  系统场景: <g><path fill="#fff" stroke="#2d5a55" strokeWidth={1.800} d="M1 1h24v24h-24z" /><path stroke="#2d5a55" strokeWidth={3} d="M1 1h24" /><path fill="#6a78d8" stroke="none" d="M3 6h7v5h-7zM17 6h7v5h-7z" /><path stroke="#222" strokeWidth={1.500} d="M10 7h6M12 20h4M17 12h6" /><path stroke="#2a2ac0" d="M4 16h4l2 2v5h-6z" /><path fill="#999" stroke="#444" d="M16 16h8v7h-8z" /></g>,
};

const ResItem = ({ name, active, apart }: { name: string; active?: boolean; apart?: boolean }) => (
  <ResButton $active={active} $apart={apart} aria-label={name}>
    <IconSvg viewBox="0 0 26 26" fill="none" stroke="#555" strokeWidth={1.1}>{RES[name]}</IconSvg>
  </ResButton>
);

/* ---------- dialog ---------- */

const Dialog = styled.form`
  position: absolute;
  left: 829px;
  top: 34px;
  width: 364px;
  padding-bottom: 13px;
  background: #e8e8e8;
  border: 1px solid #c0c0c0;
  border-top: 0;
  z-index: 5;
`;

const DialogTitle = styled.header`
  height: 27px;
  margin: 0 -1px;
  padding: 0 8px;
  display: flex;
  align-items: center;
  background: #5d8782;
  color: #fff;
  h1 { flex: 1; margin: 0 0 0 10px; padding-bottom: 3px; font-size: 14px; line-height: 20px; font-weight: 400; }
  svg { width: 17px; height: 17px; display: block; }
  button { margin-left: 5px; }
`;

const Group = styled.fieldset`
  margin: 4px 5px 0;
  padding: 0 9px 9px;
  border: 0;
  min-width: 0;
  background: #fff;
  box-shadow: 0 1px 1px #c6c6c6;
`;

const GroupHead = styled.div`
  height: 33px;
  padding-bottom: 6px;
  display: flex;
  align-items: center;
  justify-content: space-between;
  font-size: 15px;
  line-height: 22px;
  color: #3b88b8;
  svg { width: 13px; height: 10px; }
`;

const OffsetSelect = styled.label`
  position: relative;
  display: block;
  select {
    display: block;
    width: 100%;
    height: 29px;
    padding: 0 24px 2px 27px;
    appearance: none;
    border: 1px solid #a2a2a2;
    border-radius: 0;
    background: #fff;
    font-size: 13px;
  }
  svg { position: absolute; left: 6px; top: 6px; width: 17px; height: 17px; }
  > i { position: absolute; right: 6px; top: 13px; border-width: 4px; border-bottom-width: 0; }
`;

const Field = styled.label`
  display: flex;
  align-items: center;
  justify-content: space-between;
  padding-left: 1px;
  font-size: 13px;
  input {
    width: 92px;
    height: 25px;
    padding: 0 3px 0 23px;
    border: 1px solid #a2a2a2;
    border-radius: 0;
    font-size: 18px;
    font-weight: 300;
  }
`;

const Actions = styled.div`
  display: flex;
  justify-content: flex-end;
  gap: 5px;
  padding: 14px 16px 0 0;
`;

const Action = styled.button<{ $main?: boolean }>`
  width: 61px;
  height: 27px;
  padding-bottom: 1px;
  font-size: 13px;
  background: ${({ $main }) => ($main ? "#9ccbe2" : "#c8c8cc")};
  border: 1px solid ${({ $main }) => ($main ? "#5a9fcb" : "#b0b0b4")};
`;

const Chevron = () => (
  <svg viewBox="0 0 13 10" fill="none" stroke="#2f82b5" strokeWidth={2.2}><path d="M2 9l4.500 -7 4.500 7" /></svg>
);

const Gear = ({ color, width = 2 }: { color: string; width?: number }) => (
  <svg viewBox="0 0 18 18" fill="none" stroke={color} strokeWidth={width}>
    <circle cx="9" cy="9" r="5.500" />
    <path strokeWidth={width + 0.6} d="M9 1v2.500M9 14.500v2.500M1 9h2.500M14.500 9h2.500M3.300 3.300l1.800 1.800M12.900 12.900l1.800 1.800M3.300 14.700l1.800 -1.800M12.900 5.100l1.800 -1.800" />
    <circle cx="9" cy="9" r="0.700" />
  </svg>
);

/* ---------- status ---------- */

const Status = styled.footer`
  height: 24px;
  flex: none;
  display: flex;
  align-items: center;
  justify-content: space-between;
  padding: 0 61px 5px 3px;
  border-top: 1px solid #a9a9a9;
  font-size: 12px;
  font-weight: 500;
  svg { width: 18px; height: 18px; margin-top: 6px; }
`;

const LevelSelect = styled(SelectWrap)`
  margin: 0 4px;
`;

const MENUS: [string, string, string, boolean?][] = [
  ["文件(", "F", ")"], ["编辑(", "E", ")"], ["视图(", "V", ")"], ["插入(", "S", ")"], ["格式(", "R", ")"],
  ["工具(", "T", ")"], ["装配(", "A", ")"], ["信息(", "I", ")"], ["分析(", "L", ")"], ["首选项(", "P", ")", true],
  ["窗口(", "O", ")"], ["GC工具箱", "", ""], ["星空 V7.4", "", ""], ["", "D", " 进玉电极V10"], ["帮助(", "H", ")"], ["机明软件", "", ""],
];

const COLS: [string, string][] = [["", "40.600%"], ["刀...", "6.400%"], ["刀具", "12.100%"], ["几何体", "10.700%"], ["方法", "15.200%"], ["余量", "12.100%"], ["底", "2.900%"]];

export default function App() {
  return (
    <Frame>
      <Global />
      <DesktopEdge />
      <Shell>
        <MenuBar>
          <Grip />
          <MenuLogo viewBox="0 0 16 18" fill="none">
            <path stroke="#3a49b8" strokeWidth={4} d="M4 1v12" />
            <path stroke="#7a828c" strokeWidth={1.4} d="M7 5h9l-3 3h-6M7 11h5" />
            <path stroke="#e3cf3a" strokeWidth={2} d="M1 14l3 3 3 -3" />
          </MenuLogo>
          {MENUS.map(([a, k, b, wide], i) => (
            <MenuItem key={i} $wide={wide}>{a}{k && <u>{k}</u>}{b}</MenuItem>
          ))}
          <WindowButtons>
            <button aria-label="最小化"><svg viewBox="0 0 16 16"><path stroke="#111" strokeWidth={2} d="M3 13h9" /></svg></button>
            <button aria-label="还原"><svg viewBox="0 0 16 16" fill="none" stroke="#111" strokeWidth={1.6}><path d="M5 7v-4h9v6h-3" /><path d="M2 7.500h9v5h-9z" /><path strokeWidth={2.4} d="M2 8h9M5 3h9" /></svg></button>
            <button aria-label="关闭"><svg viewBox="0 0 16 16" stroke="#a5adad" strokeWidth={2.2}><path d="M3 4l9 9M12 4l-9 9" /></svg></button>
          </WindowButtons>
        </MenuBar>

        <ToolRow $h={39}>
          <Section $w={719}>
            <Grip />
            <StartButton>
              <svg width={26} height={26} viewBox="0 0 26 26" aria-hidden>
                <circle cx="12" cy="15" r="10" fill="#3f8fd0" />
                <path fill="#4fae6a" d="M3 11l8 2 2 10c-7 2 -11 -4 -10 -12z" />
                <path fill="#9fd4f0" d="M12 6c5 0 9 3 9 7l-8 3z" />
                <path fill="none" stroke="#e8b93a" strokeWidth={2} d="M17 5c7 -2 10 1 5 7s-12 10 -17 10" />
                <path fill="#c8303a" d="M4 3l13 -2 -5 12z" />
              </svg>
              <span>启动</span>
              <Triangle />
            </StartButton>
            <ToolItems items={["newFile", "open", "save", "print", "|", "cut", "copy", "paste", "del", "|", "undo", "v", "|", "cubeTree", "v", "|", "rotBox", "twoBox", "|"]} />
            <SearchBox>
              <input placeholder="查找命令" aria-label="查找命令" />
              <svg viewBox="0 0 18 18" fill="none" stroke="#333" strokeWidth={1.3}><circle cx="11.500" cy="6.500" r="5" /><circle cx="11.500" cy="6.500" r="2.500" strokeWidth={0.8} /><path d="M7.500 9l-6 6 1.500 1.500 6 -6" /></svg>
            </SearchBox>
            <Overflow w={20} />
          </Section>
          <Section $w={167}>
            <Grip />
            <ToolItems items={["clamp", "v",
              <ToolButton aria-label="渲染样式">
                <IconSvg viewBox="0 0 26 26">
                  <defs><radialGradient id="ball" cx="0.35" cy="0.3"><stop offset="0" stopColor="#fbf6c0" /><stop offset="1" stopColor="#b3a248" /></radialGradient></defs>
                  <circle cx="13" cy="13" r="10" fill="url(#ball)" />
                  <path fill="#4f9f9a" fillOpacity={0.85} d="M3.500 15c7 3 13 -1 19 -3 1 6 -4 11 -9.500 11s-9 -4 -9.500 -8z" />
                </IconSvg>
              </ToolButton>, "v", "square", "v"]} />
            <Overflow w={12} />
          </Section>
          <Section $w={416}>
            <Grip />
            <ToolItems items={["line", "v", "line", "arc", "curveOn",
              <ToolButton aria-label="文本"><IconSvg viewBox="0 0 26 26"><text x="3" y="22" fontSize="28" fontWeight="700" fontFamily="Liberation Serif" fill="#a0a0a0">A</text></IconSvg></ToolButton>,
              <ToolButton aria-label="注释"><IconSvg viewBox="0 0 26 26"><path fill="none" stroke="#999" strokeWidth={1.4} d="M1 1h24v24h-24z" /><text x="5" y="21" fontSize="23" fontWeight="700" fontFamily="Liberation Serif" fill="#a0a0a0">A</text></IconSvg></ToolButton>,
              "offset", "sheet", "patch", "spline"]} />
            <Spacer $w={34} />
            <Overflow w={17} more />
          </Section>
          <Section $w={210}>
            <Grip />
            <ToolItems items={["pageWrench", "trimA", "trimB", "trimC", "trimD"]} />
            <Spacer $w={12} />
            <Overflow w={18} more />
          </Section>
          <Section $w={59}>
            <Grip />
            <ToolItems items={["cubeX"]} />
            <Overflow w={16} more />
          </Section>
        </ToolRow>

        <ToolRow $h={38}>
          <Section $w={588}>
            <Grip />
            <ToolItems items={["sheetView", "v", "abs", "dimX", "layerList", "left", "right", "leftD", "rightD", "leftBox", "rightBox", "cubeIn", "cubeSolid", "wireBox", "spotlight", "cubeMove", "fade"]} />
            <Overflow w={17} />
          </Section>
          <Section $w={983}>
            <Grip />
            <ToolItems items={["rotBox", "twoBox", "extrude", "ruler", "boundBox", "radius", "plates", "surfDown", "slab", "press", "dice", "cubeGray", "pin", "wireTwo", "split", "stretch", "rect", "v", "hex", "v", "ibeam", "vblock", "csys", "crossBox", "circBox", "textObj", "circle", "bend", "xt"]} />
            <Overflow w={20} />
          </Section>
        </ToolRow>

        <FilterRow>
          <FilterSelects>
            <SelectWrap $w={148} $tone="#9a9a9a">
              <select aria-label="类型过滤器" defaultValue=""><option value="" /></select>
              <Triangle />
            </SelectWrap>
            <SelectWrap $w={155} $tone="#9a9a9a">
              <select aria-label="选择范围"><option>仅在工作部件内</option></select>
              <Triangle />
            </SelectWrap>
          </FilterSelects>
          <FilterTools>
            <SmallButton $w={32} aria-label="asm"><Icon name="asm" /></SmallButton>
            <SmallDivider />
            <SmallButton $w={24} aria-label="hook"><Icon name="hook" /></SmallButton>
            <SmallButton $w={22} aria-label="snap"><Icon name="snapRed" /></SmallButton>
            <SmallButton $w={14} aria-label="展开"><Triangle /></SmallButton>
            <SmallButton $w={26} aria-label="snapGray"><Icon name="snapGray" /></SmallButton>
            <SmallButton $w={26} aria-label="snapTree"><Icon name="snapTree" /></SmallButton>
            <SmallDivider />
            <SmallButton aria-label="nut"><Icon name="nut" /></SmallButton>
            <SmallButton $w={26} aria-label="dashSel"><Icon name="dashSel" /></SmallButton>
            <SmallButton $w={14} aria-label="展开"><Triangle /></SmallButton>
            <SmallDivider />
            <SmallButton aria-label="rock"><Icon name="rock" /></SmallButton>
            <SmallButton $w={24} aria-label="blueCube"><Icon name="blueCube" /></SmallButton>
          </FilterTools>
          <Spacer $w={1} />
          <Overflow w={0} />
        </FilterRow>

        <Main>
          <Viewport>
            <Model />
            <LogoCard>
              <svg viewBox="0 0 130 86" aria-label="千言教育">
                <defs>
                  <linearGradient id="q" x1="0" y1="0" x2="0" y2="1"><stop offset="0" stopColor="#2a9ad6" /><stop offset="0.600" stopColor="#1650a0" /><stop offset="1" stopColor="#12327e" /></linearGradient>
                  <linearGradient id="dot" x1="0" y1="0" x2="0" y2="1"><stop offset="0" stopColor="#f0302a" /><stop offset="1" stopColor="#f58220" /></linearGradient>
                </defs>
                <ellipse cx="55" cy="18" rx="6" ry="8" fill="url(#dot)" />
                <path fill="#2a8fc8" d="M69 5l8 1 -1 5 -8 -1z" />
                <path fill="url(#q)" d="M64 13C78 9 90 18 91 38C92 54 86 66 77 72L72 68C82 60 86 50 85 37C84 22 78 13 64 13Z" />
                <path fill="url(#q)" d="M79 33C70 24 52 26 44 39C36 53 38 70 53 76L60 74C49 66 47 56 51 44C56 32 67 28 79 33Z" />
                <path fill="#1a4f9e" d="M63 35v32l-6 -1c-2 -10 1 -17 6 -31zM66 33c6 11 9 22 4 33l-4 1z" />
                <path fill="#12327e" d="M48 76C60 66 68 70 76 74C84 76 90 73 95 70C90 82 80 84 72 79C64 74 58 73 48 76Z" />
                <path fill="#1f6fb5" d="M55 82C64 76 70 80 76 82C82 84 86 83 89 81C84 88 76 88 70 85C64 82 60 81 55 82Z" />
              </svg>
              <LogoName>千言教育</LogoName>
              <LogoLatin>QIANYAN EDUCATION</LogoLatin>
            </LogoCard>
            <Slogan><span>没有激流则谈不上勇进，</span><span>没有山峰则谈不上攀登。</span></Slogan>
          </Viewport>

          <SideTools>
            <SideGroup $w={356}>
              <SideGrip />
              <ToolItems items={["docTree"]} />
              <Spacer $w={205} />
              <ToolItems items={["millGear", "water", "millStar"]} />
              <DropButton aria-label="更多"><Triangle $dir="left" /></DropButton>
            </SideGroup>
            <SideGroup $w={484}>
              <SideGrip />
              <ToolItems items={["mill", "zigWrench", "zigX", "zigArrow", "zigPage", "checkMill", "vBadge", "checkPlate", "|", "toolHolder", "|", "millArrow", "millPage", "millRobot", "shopDoc"]} />
              <DropButton aria-label="更多"><Triangle $dir="left" /></DropButton>
            </SideGroup>
          </SideTools>

          <Navigator>
            <NavTitle>
              <svg viewBox="0 0 13 13" fill="none" stroke="#222"><path d="M0.500 1v11.500h12v-11.500" /><path strokeWidth={3} d="M0 1.500h13" /></svg>
              工序导航器 - 几何
            </NavTitle>
            <TableBox>
              <OpTable>
                <colgroup>{COLS.map(([, w], i) => <col key={i} style={{ width: w }} />)}</colgroup>
                <thead><tr>{COLS.map(([t], i) => <th key={i} scope="col">{t}</th>)}</tr></thead>
                <tbody>
                  {Array.from({ length: 36 }, (_, r) => (
                    <tr key={r} aria-selected={r === 3}>{COLS.map((_, c) => <td key={c} />)}</tr>
                  ))}
                </tbody>
              </OpTable>
            </TableBox>
            <HScroll>
              <button aria-label="向左滚动"><svg viewBox="0 0 8 10" fill="none" stroke="#444" strokeWidth={2}><path d="M6 1l-4 4 4 4" /></svg></button>
              <Track />
              <button aria-label="向右滚动"><svg viewBox="0 0 8 10" fill="none" stroke="#444" strokeWidth={2}><path d="M2 1l4 4 -4 4" /></svg></button>
            </HScroll>
            <NavFoot />
          </Navigator>

          <ResourceBar>
            <ResTop aria-label="资源条选项"><Gear color="#333" width={1.3} /></ResTop>
            <ResItem name="装配导航器" />
            <ResItem name="约束导航器" />
            <ResItem name="部件导航器" />
            <ResItem name="工序导航器" active />
            <ResItem name="加工特征导航器" />
            <ResItem name="机床导航器" />
            <ResItem name="重用库" />
            <ResItem name="信息" apart />
            <ResItem name="浏览器" apart />
            <ResItem name="历史记录" apart />
            <ResItem name="可视化" />
            <ResItem name="加工向导" />
            <ResItem name="角色工具" />
            <ResItem name="角色" />
            <ResItem name="系统场景" />
            <ResScroll>
              <svg viewBox="0 0 32 8" fill="none" stroke="#777" strokeWidth={1.4}><path d="M0 4c5 -4 8 2 14 3s8 -5 17 -4" /></svg>
              <button aria-label="滚动到顶部"><Triangle $dir="up" $tone="#aaa" /><Bar $tone="#aaa" /></button>
              <button aria-label="向上滚动"><Triangle $dir="up" $tone="#aaa" /></button>
              <button aria-label="向下滚动"><Triangle /></button>
              <button aria-label="滚动到底部"><Bar $tone="#111" /><Triangle /></button>
            </ResScroll>
          </ResourceBar>

          <Dialog onSubmit={(e) => e.preventDefault()}>
            <DialogTitle>
              <Gear color="#fff" width={2} />
              <h1>毛坯几何体</h1>
              <button type="button" aria-label="重置"><svg viewBox="0 0 17 17" fill="none" stroke="#fff" strokeWidth={2}><path d="M9 3.500a5.500 5.500 0 1 1 -5.500 5.500v-5M0.500 5.500h5" /></svg></button>
              <button type="button" aria-label="关闭"><svg viewBox="0 0 17 17" fill="none" stroke="#fff" strokeWidth={2.4}><path d="M3 3l11 11M14 3l-11 11" /></svg></button>
            </DialogTitle>
            <Group>
              <GroupHead><span>类型</span><Chevron /></GroupHead>
              <OffsetSelect>
                <select aria-label="类型"><option>部件的偏置</option></select>
                <svg viewBox="0 0 17 17" aria-hidden><path fill="#7a78e8" stroke="#3a36a8" d="M3 7l5 -3 7 1v7l-5 3 -7 -2z" /><path fill="none" stroke="#d0303a" strokeDasharray="2 1" d="M1 6l6 -5h9v10M1 6v10h4" /><path fill="#b9b8ff" d="M4 7.500l4 -2.500 5 1 -4 2.500z" /></svg>
                <Triangle />
              </OffsetSelect>
            </Group>
            <Group>
              <GroupHead><span>偏置</span><Chevron /></GroupHead>
              <Field>偏置<input defaultValue="0.00000" /></Field>
            </Group>
            <Actions>
              <Action $main type="submit">确定</Action>
              <Action type="button">取消</Action>
            </Actions>
          </Dialog>
        </Main>

        <ToolRow $h={38}>
          <Section $w={435}>
            <Grip />
            <LevelSelect $w={54}>
              <select aria-label="层"><option>200</option></select>
              <Triangle />
            </LevelSelect>
            <ToolItems items={["layers", "layers", "v", "csysRed", "v", "|", "magnetPin", "palette", "|", "flipDiamond", "v", "|", "measureRed", "v", "measureLen"]} />
            <Overflow w={12} />
          </Section>
          <Section $w={237}>
            <Grip />
            <ToolItems items={["analysis", "v", "plus", "v", "pushUp", "v", "cyl", "blockYellow"]} />
            <Overflow w={16} />
          </Section>
          <Section $w={781}>
            <Grip />
            <ToolItems items={["pages2", "bricks", "funnel", "mill", "mill2", "holeDrill", "millBlock", "millPage", "millArrow", "millP", "helix", "millWrench", "bolt", "machine", "millRobot", "calcM", "aEdit", "pen", "swap", "tubes", "calc", "clock"]} />
            <Overflow w={18} />
          </Section>
          <Section $w={118}>
            <Grip />
            <ToolItems items={["stepBlock", "stockCyl"]} />
            <Spacer $w={22} />
            <Overflow w={18} more />
          </Section>
        </ToolRow>
        <Status>
          <span>拖动光标以绕 X-Y 旋转视图</span>
          <svg viewBox="0 0 18 18" fill="none" stroke="#8a93a8" strokeWidth={1.6}><path d="M1 5v-4h4M13 1h4v4M17 13v4h-4M5 17h-4v-4" /><path stroke="#555e78" fill="#fff" d="M4 4h10v10h-10z" /><path fill="#4a8ad8" stroke="none" d="M6 8h6v4h-6z" /></svg>
        </Status>
      </Shell>
    </Frame>
  );
}
